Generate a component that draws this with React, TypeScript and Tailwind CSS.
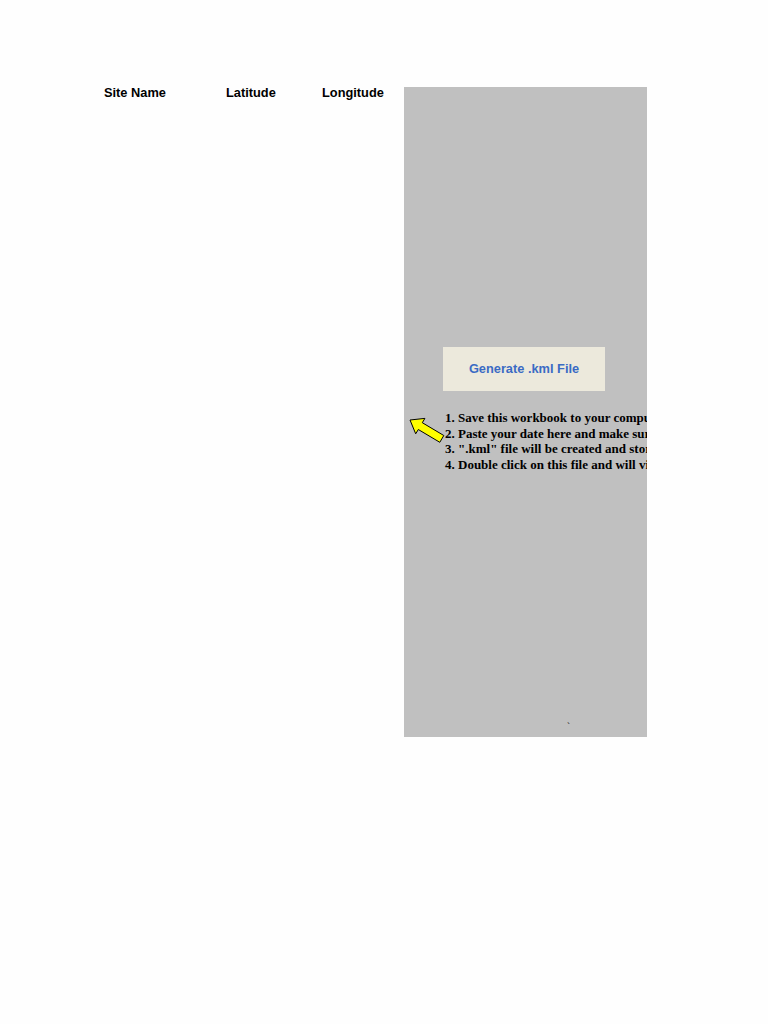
export default function App() {
  return (
    <div className="w-full h-[1024px] bg-[#fefefe]">
      <div className="flex pt-[87px]">
        <div className="w-[404px] shrink-0 pl-[104px] flex text-[12.8px] font-bold text-black leading-[14px] -mt-[1px]" style={{ fontFamily: '"Liberation Sans", Arial, sans-serif' }}>
          <div className="w-[122px]">Site Name</div>
          <div className="w-[96px]">Latitude</div>
          <div>Longitude</div>
        </div>
        <div className="relative w-[243px] h-[650px] bg-[#c0c0c0] overflow-hidden shrink-0">
          <div className="ml-[39px] mt-[260px] w-[162px] h-[44px] bg-[#ece9dc] flex items-center justify-center text-[12.8px] font-bold text-[#3a6bc4]" style={{ fontFamily: '"Liberation Sans", Arial, sans-serif' }}>
            Generate .kml File
          </div>
          <div className="ml-[41px] mt-[19px] text-[13px] font-bold text-black leading-[15.5px] whitespace-nowrap" style={{ fontFamily: '"Liberation Serif", "Times New Roman", serif' }}>
            <div>1. Save this workbook to your computer</div>
            <div>2. Paste your date here and make sure</div>
            <div>3. ".kml" file will be created and stored</div>
            <div>4. Double click on this file and will view</div>
          </div>
          <svg className="absolute left-0 top-[318px]" width="45" height="45" viewBox="0 0 45 45">
            <polygon points="6,15 20.9,13.4 18.3,17.7 39.8,30.5 35.8,37.3 14.3,24.5 11.7,28.8" fill="#ffff00" stroke="#000" strokeWidth="1" strokeLinejoin="miter" />
          </svg>
          <div className="absolute left-[163px] top-[635px] text-[9px] text-black leading-none" style={{ fontFamily: '"Liberation Serif", serif' }}>`</div>
        </div>
      </div>
    </div>
  );
}
